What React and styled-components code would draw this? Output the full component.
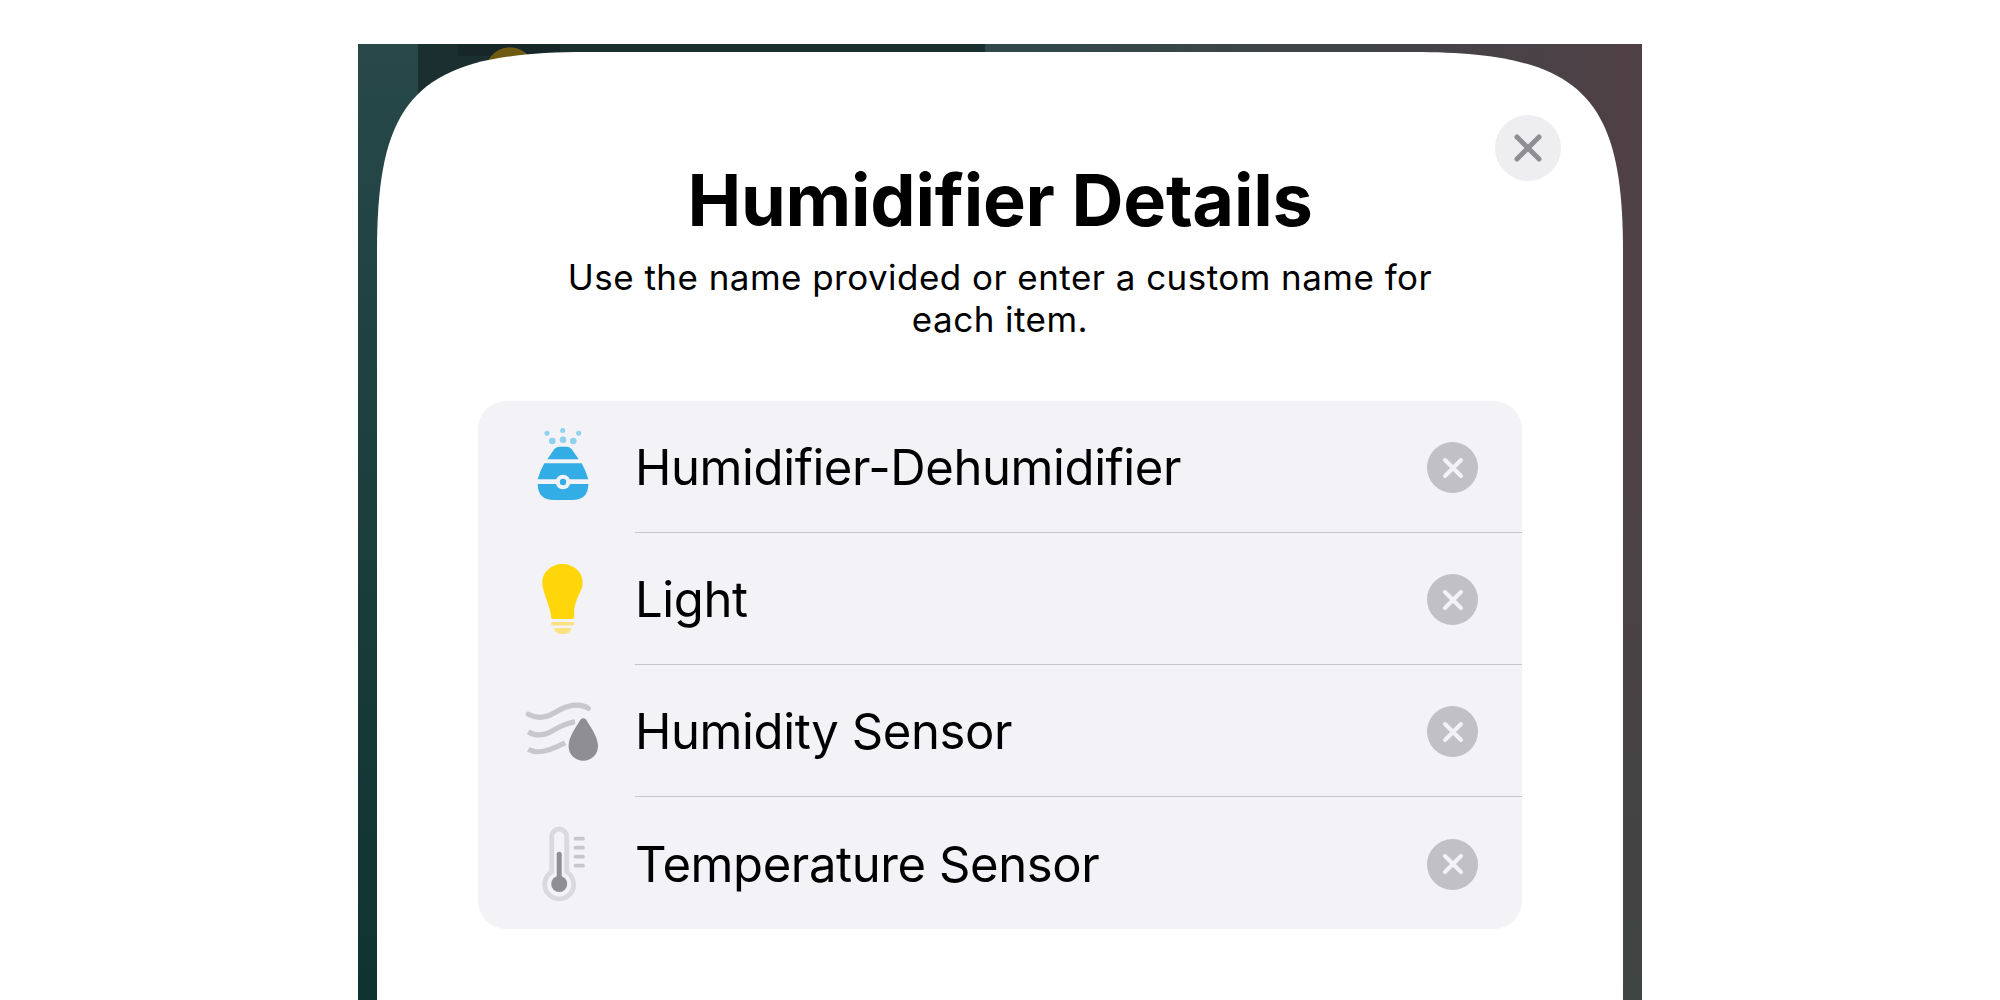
import styled, { createGlobalStyle } from "styled-components";

const GlobalStyle = createGlobalStyle`
  html, body {
    margin: 0;
    padding: 0;
    background: #fff;
  }
`;

const Page = styled.div`
  width: 2000px;
  height: 1000px;
  padding-top: 44px;
  box-sizing: border-box;
  overflow: hidden;
  display: flex;
  justify-content: center;
  font-family: Inter, "Liberation Sans", sans-serif;
  color: #000;
`;

// what shows round the sheet: the dimmed screen behind it
const Backdrop = styled.div`
  width: 1284px;
  height: 956px;
  box-sizing: border-box;
  padding: 8px 19px 0;
  background:
    radial-gradient(circle 25px at 152px 28px, #6e5a10 97%, transparent) no-repeat,
    linear-gradient(#162629, #162629) 100px 0 / 102px 12px no-repeat,
    linear-gradient(#1b2f31, #1b2f31) 60px 0 / 567px 60px no-repeat,
    linear-gradient(90deg, #2f484b, #4f4045) 627px 0 / 657px 100px no-repeat,
    linear-gradient(#284849, #0f3330) 0 0 / 627px 100% no-repeat,
    linear-gradient(#4f4146 40%, #3f4444) 627px 0 / 657px 100% no-repeat;
`;

const Sheet = styled.div`
  position: relative;
  height: 948px;
  box-sizing: border-box;
  padding: 105px 101px 0;
  background: #fff;
  clip-path: path("M0 200C0 45 40 0 210 0H1036C1206 0 1246 45 1246 200V948H0Z");
  display: flex;
  flex-direction: column;
  align-items: center;
`;

const CloseButton = styled.button`
  position: absolute;
  top: 63px;
  right: 62px;
  width: 66px;
  height: 66px;
  padding: 0;
  border: 0;
  border-radius: 50%;
  background: #eeeef0;
  display: flex;
  align-items: center;
  justify-content: center;
`;

const Title = styled.h1`
  margin: 0;
  font-size: 72px;
  line-height: 86px;
  font-weight: 700;
  letter-spacing: -0.25px;
`;

const Subtitle = styled.p`
  margin: 13px 0 0;
  width: 900px;
  font-size: 35px;
  line-height: 42px;
  font-weight: 400;
  letter-spacing: 0.46px;
  text-align: center;
`;

const List = styled.div`
  margin-top: 61px;
  width: 100%;
  background: #f2f2f7;
  border-radius: 28px;
  overflow: hidden;
`;

const Row = styled.div`
  height: 132px;
  box-sizing: border-box;
  padding-top: 2px;
  display: flex;
  align-items: center;
`;

const IconCell = styled.div`
  width: 157px;
  flex: none;
  display: flex;
  justify-content: center;
  padding-left: 13px;
  box-sizing: border-box;
`;

const RowBody = styled.div`
  flex: 1;
  height: 100%;
  box-sizing: border-box;
  padding-right: 44px;
  display: flex;
  align-items: center;
  justify-content: space-between;
  border-bottom: ${(props) => (props.$last ? "0" : "1px solid #c6c6c8")};
`;

const Name = styled.span`
  font-size: 49px;
  font-weight: 400;
  letter-spacing: -0.4px;
`;

const ClearButton = styled.span`
  width: 51px;
  height: 51px;
  border-radius: 50%;
  background: #c0c0c5;
  display: flex;
  align-items: center;
  justify-content: center;
`;

const CrossIcon = ({ size, color, width }) => (
  <svg width={size} height={size} viewBox={`0 0 ${size} ${size}`} fill="none">
    <path
      d={`M${width} ${width}L${size - width} ${size - width}M${size - width} ${width}L${width} ${size - width}`}
      stroke={color}
      strokeWidth={width}
      strokeLinecap="round"
    />
  </svg>
);

const HumidifierIcon = () => (
  <svg width="80" height="80" viewBox="0 0 80 80">
    <g fill="#8fd2f0">
      <circle cx="24" cy="5.3" r="2.5" />
      <circle cx="39.7" cy="2.6" r="2.5" />
      <circle cx="55.7" cy="5.3" r="2.5" />
      <circle cx="29.3" cy="13" r="3.3" />
      <circle cx="40" cy="11.7" r="3.3" />
      <circle cx="50.3" cy="13" r="3.3" />
    </g>
    <g fill="#32ade6">
      <path d="M24.3 31.3L31 21.5Q33 18.7 36 18.7H44Q47 18.7 49 21.5L55.7 31.3Z" />
      <path d="M21.3 35.3H58.7Q63 43 65.3 51.3H14.7Q17 43 21.3 35.3Z" />
      <path d="M14.7 56H65.3Q65.3 72 49 72H31Q14.7 72 14.7 56Z" />
    </g>
    <circle cx="40" cy="54" r="7.3" fill="#f2f2f7" />
    <circle cx="40" cy="54" r="3.2" fill="#32ade6" />
  </svg>
);

const BulbIcon = () => (
  <svg width="80" height="80" viewBox="0 0 80 80">
    <path
      d="M39.5 4C50.5 4 59.7 12 59.7 22.7C59.7 31 52.5 37 51.2 50V57Q51 59 49 59H30Q28 59 28 57C28 47 19.3 33 19.3 22.7C19.3 12 28.5 4 39.5 4Z"
      fill="#ffd60a"
    />
    <rect x="28" y="62" width="23" height="3.4" rx="1.7" fill="#fae282" />
    <path d="M31 68H48.3Q48 74 39.7 74Q31.3 74 31 68Z" fill="#fae282" />
  </svg>
);

const HumidityIcon = () => (
  <svg width="80" height="80" viewBox="0 0 80 80" fill="none">
    <g stroke="#c7c7cc" strokeWidth="5.2" strokeLinecap="round">
      <path d="M5.3 22.3C13 26.5 22 26.5 32 20.5C44 13 57 10.5 65.3 16.3" />
      <path d="M5.3 39.7C12 44 21 44 30 38.5C37 34.2 44 31 52 29.7" strokeLinecap="butt" />
      <path d="M5.3 57.3C12 61.5 22 61.5 42 50.7" strokeLinecap="butt" />
    </g>
    <path
      d="M60.3 26.3C62 26.3 63 27.3 64 29C68 36 75 45 75 54C75 62.5 68.5 68.7 60.3 68.7C52.1 68.7 45.6 62.5 45.6 54C45.6 45 52.6 36 56.6 29C57.6 27.3 58.6 26.3 60.3 26.3Z"
      fill="#8e8e93"
    />
  </svg>
);

const ThermometerIcon = () => (
  <svg width="80" height="80" viewBox="0 0 80 80" fill="none">
    <path
      d="M28.7 48V12.5A7.5 7.5 0 0 1 43.7 12.5V48A14.5 14.5 0 1 1 28.7 48Z"
      stroke="#d9d9de"
      strokeWidth="4.8"
    />
    <path d="M33.7 30.3a2.5 2.5 0 0 1 5 0V60h-5Z" fill="#8e8e93" />
    <circle cx="36.2" cy="60" r="8" fill="#8e8e93" />
    <g stroke="#c7c7cc" strokeWidth="3.8" strokeLinecap="round">
      <path d="M52.5 14.7H60M52.5 23.7H60M52.5 32.7H60M52.5 41.7H60" />
    </g>
  </svg>
);

const items = [
  { name: "Humidifier-Dehumidifier", icon: <HumidifierIcon /> },
  { name: "Light", icon: <BulbIcon /> },
  { name: "Humidity Sensor", icon: <HumidityIcon /> },
  { name: "Temperature Sensor", icon: <ThermometerIcon /> },
];

function App() {
  return (
    <Page>
      <GlobalStyle />
      <Backdrop>
        <Sheet>
          <CloseButton aria-label="Close">
            <CrossIcon size={32} color="#8e8e93" width={5} />
          </CloseButton>
          <Title>Humidifier Details</Title>
          <Subtitle>Use the name provided or enter a custom name for each item.</Subtitle>
          <List>
            {items.map((item, i) => (
              <Row key={item.name}>
                <IconCell>{item.icon}</IconCell>
                <RowBody $last={i === items.length - 1}>
                  <Name>{item.name}</Name>
                  <ClearButton>
                    <CrossIcon size={24} color="#f2f2f7" width={4} />
                  </ClearButton>
                </RowBody>
              </Row>
            ))}
          </List>
        </Sheet>
      </Backdrop>
    </Page>
  );
}

export default App;
